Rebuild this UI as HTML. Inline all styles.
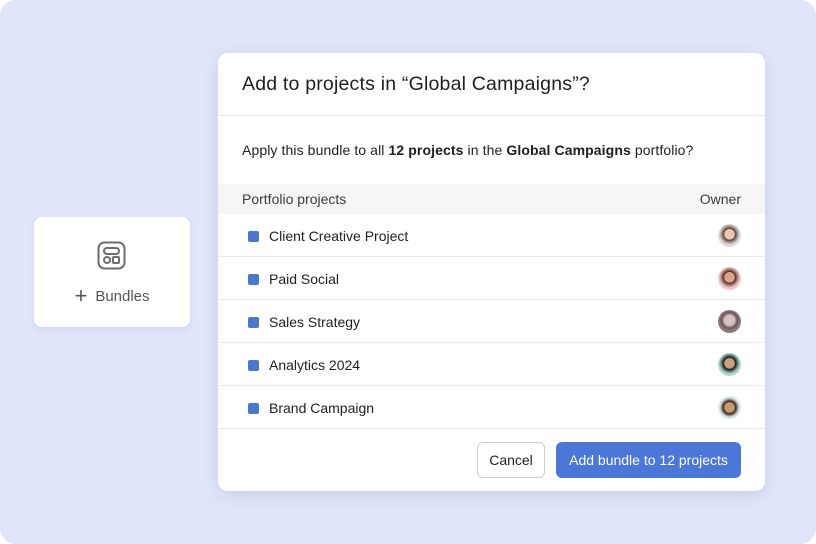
<!DOCTYPE html>
<html><head><style>
*{margin:0;padding:0;box-sizing:border-box}
body{width:816px;height:544px;background:#fff;font-family:"Liberation Sans",sans-serif;position:relative;overflow:hidden}
.bg{position:absolute;inset:0;background:#dfe6fb;border-radius:16px}
.card{position:absolute;left:34px;top:217px;width:156px;height:110px;background:#fff;border-radius:8px;box-shadow:0 2px 6px rgba(80,90,140,.12)}
.card .lbl{position:absolute;top:66px;left:0;right:0;text-align:center;color:#555;font-size:15px}
.modal{position:absolute;left:218px;top:53px;width:547px;height:438px;background:#fff;border-radius:10px;box-shadow:0 4px 16px rgba(60,70,120,.15);overflow:hidden}
h1{position:absolute;left:24px;top:20px;font-size:19.5px;font-weight:normal;color:#1e1f21;letter-spacing:0.2px}
.hl{position:absolute;left:0;right:0;top:62px;border-top:1px solid #e8e8ea}
.q{position:absolute;left:24px;top:89px;font-size:14px;color:#1e1f21;letter-spacing:0.1px}
.th{position:absolute;left:0;right:0;top:131px;height:30px;background:#f6f6f7;font-size:14px;color:#3a3b3e}
.th span{position:absolute;top:7px}
.row{position:absolute;left:0;right:0;height:43px;border-bottom:1px solid #ececee;font-size:14px;color:#1e1f21}
.row .sq{position:absolute;left:30px;top:17px;width:11px;height:11px;border-radius:2px;background:#4a77d0}
.row .t{position:absolute;left:51px;top:14px}
.row .av{position:absolute;right:24px;top:10px;width:23px;height:23px;border-radius:50%}
.fl{position:absolute;left:0;right:0;top:375px;border-top:1px solid #e8e8ea}
.btn{position:absolute;top:389px;height:36px;border-radius:6px;font-size:14px;line-height:34px;text-align:center}
</style></head><body>
<div class="bg"></div>
<div class="card">
<svg style="position:absolute;left:63px;top:24px" width="29" height="29" viewBox="0 0 29 29" fill="none" stroke="#6d6e6f" stroke-width="2"><rect x="1.5" y="1.5" width="26" height="26" rx="6"/><rect x="7" y="7" width="15" height="6" rx="3"/><circle cx="10" cy="19" r="3"/><rect x="16" y="16" width="6" height="6" rx="1"/></svg>
<div class="lbl"><span style="font-size:22px;vertical-align:-2px;margin-right:8px">+</span>Bundles</div>
</div>
<div class="modal">
<h1>Add to projects in “Global Campaigns”?</h1>
<div class="hl"></div>
<div class="q">Apply this bundle to all <b>12 projects</b> in the <b>Global Campaigns</b> portfolio?</div>
<div class="th"><span style="left:24px">Portfolio projects</span><span style="right:24px">Owner</span></div>
<div class="row" style="top:161px"><div class="sq"></div><div class="t">Client Creative Project</div><div class="av" style="background:radial-gradient(circle at 50% 45%,#e9c6b0 30%,#5a3a2a 32%,#ddd 60%)"></div></div>
<div class="row" style="top:204px"><div class="sq"></div><div class="t">Paid Social</div><div class="av" style="background:radial-gradient(circle at 50% 45%,#d9a58a 30%,#4a2a20 32%,#f2c6c6 60%)"></div></div>
<div class="row" style="top:247px"><div class="sq"></div><div class="t">Sales Strategy</div><div class="av" style="background:radial-gradient(circle at 50% 45%,#d8c0bc 30%,#6a5558 45%,#8a7a80 60%)"></div></div>
<div class="row" style="top:290px"><div class="sq"></div><div class="t">Analytics 2024</div><div class="av" style="background:radial-gradient(circle at 50% 45%,#c9a080 28%,#1a1a1a 35%,#a8d8cc 60%)"></div></div>
<div class="row" style="top:333px;border:none"><div class="sq"></div><div class="t">Brand Campaign</div><div class="av" style="background:radial-gradient(circle at 50% 50%,#c89a70 28%,#3a2a20 38%,#dfe6ea 60%)"></div></div>
<div class="fl"></div>
<div class="btn" style="left:259px;width:68px;border:1px solid #cfcfd2;color:#1e1f21">Cancel</div>
<div class="btn" style="left:338px;width:185px;background:#4a77d8;color:#fff;line-height:36px">Add bundle to 12 projects</div>
</div>
</body></html>
